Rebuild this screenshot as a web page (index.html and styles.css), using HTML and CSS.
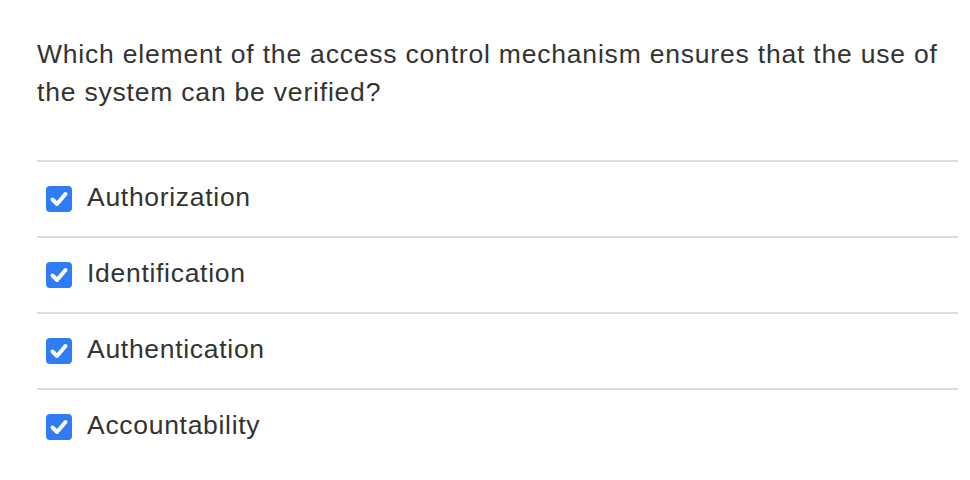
FILE: index.html
```html
<!DOCTYPE html>
<html lang="en">
<head>
  <meta charset="UTF-8">
  <title>Question</title>
  <link rel="stylesheet" href="styles.css">
</head>
<body>
  <div class="question">
    <p class="question-text">Which element of the access control mechanism ensures that the use of<br>the system can be verified?</p>
    <ul class="answers">
      <li class="answer">
        <span class="box"><svg viewBox="0 0 26 26" width="26" height="26"><path d="M6.5 13.5 L11 18 L19.5 8" fill="none" stroke="#fff" stroke-width="4" stroke-linecap="round" stroke-linejoin="round"/></svg></span>
        <span class="label">Authorization</span>
      </li>
      <li class="answer">
        <span class="box"><svg viewBox="0 0 26 26" width="26" height="26"><path d="M6.5 13.5 L11 18 L19.5 8" fill="none" stroke="#fff" stroke-width="4" stroke-linecap="round" stroke-linejoin="round"/></svg></span>
        <span class="label">Identification</span>
      </li>
      <li class="answer">
        <span class="box"><svg viewBox="0 0 26 26" width="26" height="26"><path d="M6.5 13.5 L11 18 L19.5 8" fill="none" stroke="#fff" stroke-width="4" stroke-linecap="round" stroke-linejoin="round"/></svg></span>
        <span class="label">Authentication</span>
      </li>
      <li class="answer">
        <span class="box"><svg viewBox="0 0 26 26" width="26" height="26"><path d="M6.5 13.5 L11 18 L19.5 8" fill="none" stroke="#fff" stroke-width="4" stroke-linecap="round" stroke-linejoin="round"/></svg></span>
        <span class="label">Accountability</span>
      </li>
    </ul>
  </div>
</body>
</html>
```

FILE: styles.css
```css
body {
  margin: 0;
  background: #fff;
  font-family: "Liberation Sans", Arial, sans-serif;
  color: #333;
}

.question {
  width: 921px;
  padding: 36px 0 0 37px;
}

.question-text {
  margin: 0 0 49px;
  font-size: 26.5px;
  line-height: 37.5px;
  letter-spacing: 0.8px;
}

.answers {
  list-style: none;
  margin: 0;
  padding: 0;
}

.answer {
  display: flex;
  align-items: center;
  height: 74px;
  border-top: 2px solid #dddddd;
  padding-left: 9px;
  gap: 15px;
  font-size: 26.5px;
}

.box {
  width: 26px;
  height: 26px;
  border-radius: 4px;
  background: #2f7cf6;
  display: flex;
}

.label {
  line-height: 30px;
  padding-bottom: 4px;
  letter-spacing: 0.7px;
}
```
